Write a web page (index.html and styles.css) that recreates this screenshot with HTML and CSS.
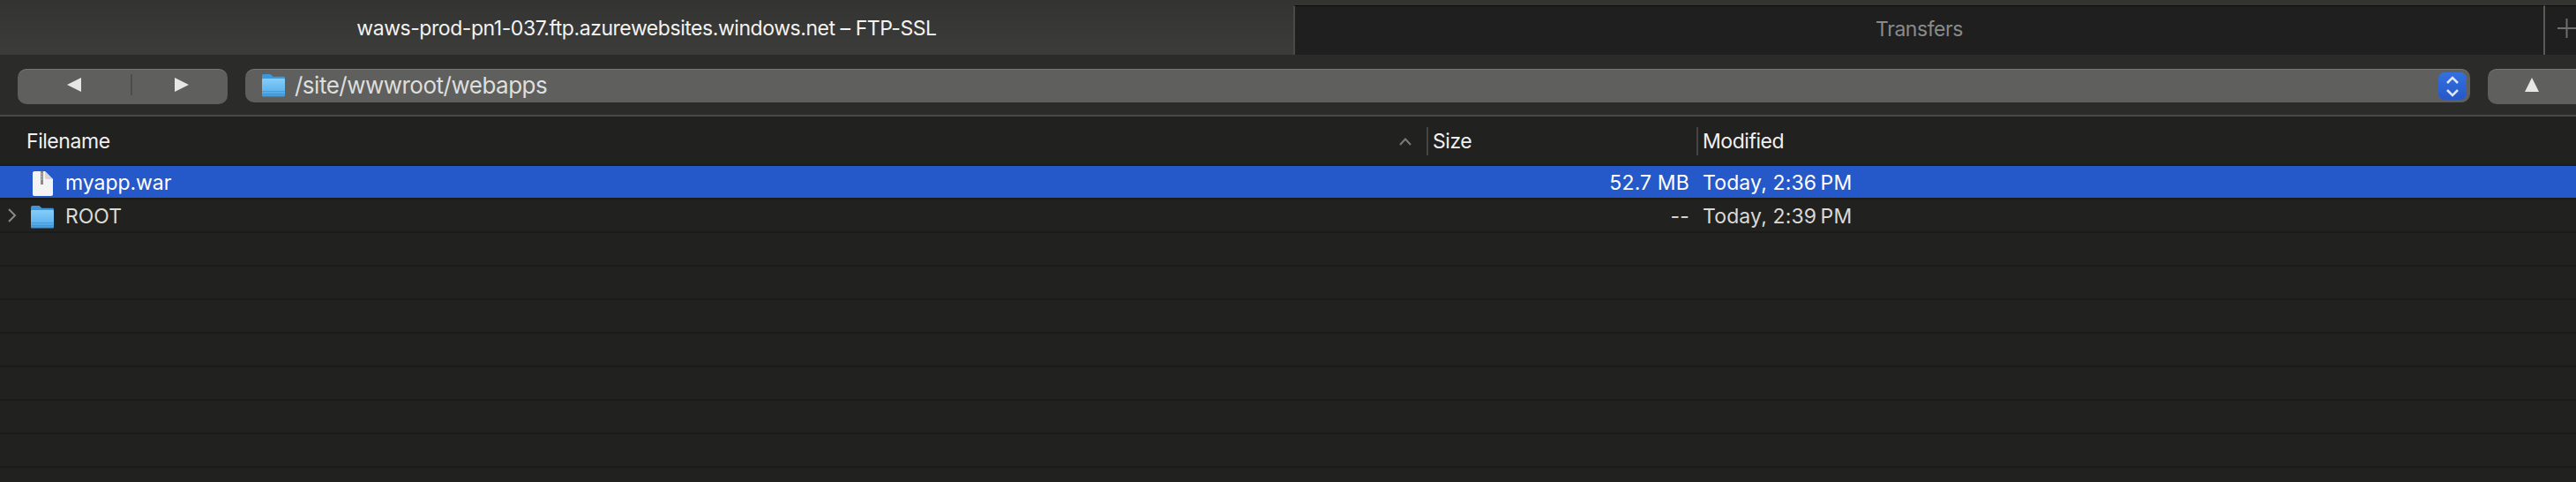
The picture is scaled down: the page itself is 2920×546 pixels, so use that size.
FILE: index.html
```html
<!DOCTYPE html>
<html lang="en">
<head>
    <meta charset="UTF-8">
    <title>waws-prod-pn1-037.ftp.azurewebsites.windows.net – FTP-SSL</title>
    <link rel="stylesheet" href="styles.css">
</head>
<body>
    <svg class="defs" width="0" height="0">
        <defs>
            <linearGradient id="folderFront" x1="0" y1="0" x2="0" y2="1">
                <stop offset="0" stop-color="#86cdf8"/>
                <stop offset="0.7" stop-color="#5fb4ee"/>
                <stop offset="1" stop-color="#3f94d6"/>
            </linearGradient>
            <symbol id="folder" viewBox="0 0 28 27">
                <path d="M1 3.500C1 1.800 1.800 1 3 1h6.500c1 0 1.600.4 2.200 1l1.600 1.800H25.500c1 0 1.500.6 1.500 1.500V10H1z" fill="#3f97db"/>
                <path d="M1 7.500c0-1 .6-1.500 1.500-1.500h23c.9 0 1.500.5 1.500 1.500V25c0 1-.6 1.500-1.500 1.500h-23C1.600 26.500 1 26 1 25z" fill="url(#folderFront)"/>
                <path d="M1 20.500h26M1 23.500h26" stroke="#3a8fd0" stroke-width="1" opacity=".6"/>
            </symbol>
        </defs>
    </svg>

    <div class="tabs">
        <div class="tab tab-active">waws-prod-pn1-037.ftp.azurewebsites.windows.net – FTP-SSL</div>
        <div class="tab tab-other">Transfers</div>
        <div class="tab-add">
            <svg width="21" height="22" viewBox="0 0 21 22"><path d="M0 11h21M10.500 0v22" stroke="#6e6e6c" stroke-width="2"/></svg>
        </div>
    </div>

    <div class="toolbar">
        <div class="btn nav-btn">
            <span class="nav-half"><svg width="16" height="16" viewBox="0 0 16 16"><path d="M16 0v16L0 8z" fill="#e6e6e6"/></svg></span>
            <span class="nav-half nav-right"><svg width="16" height="16" viewBox="0 0 16 16"><path d="M0 0v16l16-8z" fill="#e6e6e6"/></svg></span>
        </div>
        <div class="path-field">
            <svg class="icon" width="28" height="27"><use href="#folder"/></svg>
            <span class="path-text">/site/wwwroot/webapps</span>
            <span class="stepper">
                <svg width="16" height="24" viewBox="0 0 16 24"><path d="M2 8l6-6 6 6M2 16l6 6 6-6" fill="none" stroke="#dfe6f7" stroke-width="2.500"/></svg>
            </span>
        </div>
        <div class="btn up-btn">
            <svg width="16" height="16" viewBox="0 0 16 16"><path d="M8 0l8 16H0z" fill="#e6e6e6"/></svg>
        </div>
    </div>

    <div class="list-head cols">
        <div class="col-name">Filename
            <svg class="sort" width="14" height="9" viewBox="0 0 14 9"><path d="M1 8l6-6.500L13 8" fill="none" stroke="#7a7a78" stroke-width="2"/></svg>
        </div>
        <div class="col-head">Size</div>
        <div class="col-head">Modified</div>
    </div>

    <div class="rows">
        <div class="row cols selected">
            <div class="cell-name">
                <svg class="file-icon" width="24" height="28" viewBox="0 0 24 28">
                    <path d="M1 2c0-1 .6-2 2-2h12l9 9v17c0 1.200-.8 2-2 2H3c-1.400 0-2-.8-2-2z" fill="#f4f4f4"/>
                    <path d="M15 0l9 9h-7c-1.400 0-2-.8-2-2z" fill="#d4d4d6"/>
                    <path d="M10 0h3v15h-3z" fill="#8b8b8d"/>
                    <path d="M11 3h1M11 6h1M11 9h1" stroke="#eee" stroke-width="1"/>
                </svg>
                <span>myapp.war</span>
            </div>
            <div class="cell-size">52.7 MB</div>
            <div class="cell-date">Today, 2:36&#8201;PM</div>
        </div>
        <div class="row cols">
            <div class="cell-name">
                <svg class="chevron" width="10" height="16" viewBox="0 0 10 16"><path d="M1 1l7 7-7 7" fill="none" stroke="#8a8a88" stroke-width="2"/></svg>
                <svg class="folder-icon" width="28" height="27"><use href="#folder"/></svg>
                <span>ROOT</span>
            </div>
            <div class="cell-size">--</div>
            <div class="cell-date">Today, 2:39&#8201;PM</div>
        </div>
        <div class="row"></div>
        <div class="row"></div>
        <div class="row"></div>
        <div class="row"></div>
        <div class="row"></div>
        <div class="row"></div>
        <div class="row"></div>
        <div class="row"></div>
    </div>
</body>
</html>
```

FILE: styles.css
```css
body {
    margin: 0;
    width: 2920px;
    height: 546px;
    overflow: hidden;
    background-color: #21211f;
    color: #d9d9d7;
    font-family: Inter, "Liberation Sans", sans-serif;
    font-size: 23px;
    letter-spacing: -0.45px;
}
.defs {
    display: block;
    height: 0;
}

/* tabs */
.tabs {
    display: flex;
    height: 62px;
    background: linear-gradient(#333331, #3c3c3a);
}
.tab {
    display: flex;
    align-items: center;
    justify-content: center;
}
.tab-active {
    width: 1466px;
    padding-top: 2px;
    color: #f2f2f2;
}
.tab-other {
    flex: 1;
    margin-top: 6px;
    padding-bottom: 4px;
    background-color: #1f1f1f;
    border-top: 1px solid #0c0c0c;
    border-left: 2px solid #4a4a48;
    border-right: 2px solid #5a5a58;
    color: #8a8a88;
}
.tab-add {
    display: flex;
    align-items: center;
    justify-content: flex-end;
    width: 35px;
    margin-top: 6px;
    padding-bottom: 6px;
    background-color: #1f1f1f;
    border-top: 1px solid #0c0c0c;
}

/* toolbar */
.toolbar {
    display: flex;
    align-items: flex-start;
    gap: 20px;
    height: 52px;
    padding: 16px 0 0 20px;
    background-color: #2b2b2a;
    border-bottom: 2px solid #484846;
}
.btn {
    display: flex;
    align-items: center;
    justify-content: center;
    height: 39px;
    background-color: #5f5f5d;
    border-top: 1px solid #757573;
    border-radius: 10px;
}
.nav-btn {
    width: 238px;
}
.nav-half {
    flex: none;
    display: flex;
    justify-content: center;
    align-items: center;
    width: 128px;
    height: 24px;
    margin-bottom: 5px;
}
.nav-right {
    flex: 1;
    width: auto;
    border-left: 2px solid #4c4c4a;
    padding-left: 4px;
}
.up-btn {
    width: 100px;
    padding-bottom: 6px;
    height: 33px;
    border-radius: 10px 0 0 10px;
}
.path-field {
    flex: 1;
    display: flex;
    align-items: center;
    height: 37px;
    padding-left: 18px;
    padding-right: 4px;
    background-color: #5f5f5d;
    border-top: 1px solid #757573;
    border-radius: 10px;
    color: #dededc;
    font-size: 26px;
    letter-spacing: -0.5px;
}
.icon {
    margin-top: -2px;
}
.path-text {
    flex: 1;
    margin-left: 10px;
    margin-top: -2px;
}
.stepper {
    display: flex;
    align-items: center;
    justify-content: center;
    width: 32px;
    height: 31px;
    background: linear-gradient(#3570df, #2558c8);
    border-radius: 7px;
}

/* list */
.cols {
    display: grid;
    grid-template-columns: 1617px 306px 1fr;
    align-items: center;
}
.list-head {
    height: 52px;
    padding-top: 2px;
    color: #f0f0f0;
    border-bottom: 2px solid #1b1b19;
}
.col-name {
    display: flex;
    justify-content: space-between;
    align-items: center;
    padding: 0 17px 0 30px;
}
.col-head {
    display: flex;
    align-items: center;
    height: 32px;
    padding-left: 5px;
    border-left: 2px solid #444442;
}
.row {
    height: 36px;
    border-bottom: 2px solid #1b1b19;
}
.row.cols {
    height: 34px;
    padding-top: 2px;
    letter-spacing: 0.15px;
}
.selected {
    background-color: #2558c8;
    color: #fff;
}
.cell-name {
    position: relative;
    display: flex;
    align-items: center;
    padding-left: 74px;
    letter-spacing: -0.05px;
}
.file-icon {
    position: absolute;
    left: 36px;
    top: 1px;
}
.folder-icon {
    position: absolute;
    left: 34px;
    top: 1px;
}
.chevron {
    position: absolute;
    left: 9px;
    top: 5px;
}
.cell-size {
    text-align: right;
    padding-right: 8px;
}
.cell-date {
    padding-left: 7px;
}
```
